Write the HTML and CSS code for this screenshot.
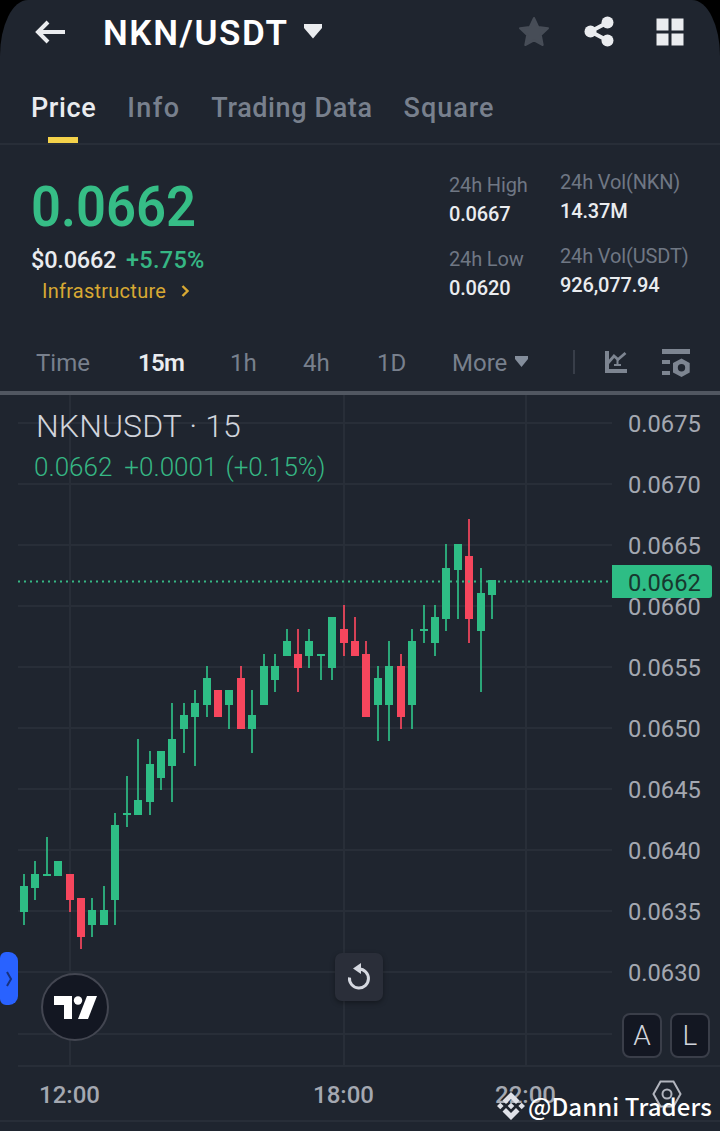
FILE: index.html
```html
<!DOCTYPE html>
<html lang="en">
<head>
  <meta charset="UTF-8">
  <title>NKN/USDT</title>
  <link rel="stylesheet" href="styles.css">
</head>
<body>

  <div class="app">
    <header class="header">
      <svg class="back" width="32" height="26" viewBox="0 0 32 26">
        <path d="M14 3L4 13L14 23M4 13H31" fill="none" stroke="#eaecef" stroke-width="4"/>
      </svg>
      <h1 class="pair">NKN/USDT</h1>
      <svg class="caret" width="18" height="15" viewBox="0 0 18 15">
        <path d="M0 0H18V4L9 14.5L0 4Z" fill="#eaecef"/>
      </svg>
      <div class="actions">
        <svg width="32" height="32" viewBox="0 0 32 32">
          <path d="M16 2L20.2 11L30 12.2L22.8 19L24.7 29L16 24.4L7.300 29L9.200 19L2 12.200L11.800 11Z" fill="#474d57" stroke="#474d57" stroke-width="2" stroke-linejoin="round"/>
        </svg>
        <svg width="32" height="32" viewBox="0 0 32 32">
          <path d="M24.500 6.500L7.500 15.500L24.500 24.500" fill="none" stroke="#eaecef" stroke-width="4"/>
          <circle cx="24.500" cy="6.500" r="6" fill="#eaecef"/>
          <circle cx="7.500" cy="15.500" r="6" fill="#eaecef"/>
          <circle cx="24.500" cy="24.500" r="6" fill="#eaecef"/>
        </svg>
        <svg width="28" height="28" viewBox="0 0 28 28">
          <path d="M0.500 0.500h12v12h-12zM15.500 0.500h12v12h-12zM0.500 15.500h12v12h-12zM15.500 15.500h12v12h-12z" fill="#eaecef"/>
        </svg>
      </div>
    </header>

    <nav class="tabs">
      <a class="tab active">Price</a>
      <a class="tab info">Info</a>
      <a class="tab trading">Trading Data</a>
      <a class="tab">Square</a>
    </nav>

    <section class="summary">
      <div class="quote">
        <div class="last-price">0.0662</div>
        <div class="fiat">$0.0662 <span class="change">+5.75%</span></div>
        <div class="category">Infrastructure
          <svg width="8" height="12" viewBox="0 0 8 12">
            <path d="M1.500 1L6.500 6L1.500 11" fill="none" stroke="#d8a933" stroke-width="2.400"/>
          </svg>
        </div>
      </div>
      <div class="stats high-low">
        <div class="stat"><span class="label">24h High</span><span class="value">0.0667</span></div>
        <div class="stat"><span class="label">24h Low</span><span class="value">0.0620</span></div>
      </div>
      <div class="stats volume">
        <div class="stat"><span class="label">24h Vol(NKN)</span><span class="value">14.37M</span></div>
        <div class="stat"><span class="label">24h Vol(USDT)</span><span class="value">926,077.94</span></div>
      </div>
    </section>

    <div class="intervals">
      <span class="interval time">Time</span>
      <span class="interval selected">15m</span>
      <span class="interval hour">1h</span>
      <span class="interval hours">4h</span>
      <span class="interval day">1D</span>
      <span class="interval more">More
        <svg width="13" height="11" viewBox="0 0 13 11"><path d="M0 0H13V3L6.500 11L0 3Z" fill="#848e9c"/></svg>
      </span>
      <span class="divider"></span>
      <svg class="indicator" width="24" height="24" viewBox="0 0 24 24" fill="none" stroke="#7d8591">
        <path d="M3 1V21H23" stroke-width="4"/>
        <path d="M4 13L10 6L14 9.500L21.500 3" stroke-width="2.800"/>
        <path d="M10 15H17M13.500 9V15" stroke-width="2"/>
      </svg>
      <svg class="settings" width="28" height="28" viewBox="0 0 28 28">
        <path d="M0 0H28V5H0ZM0 11H8V15H0ZM0 22H8V26H0Z" fill="#7d8591"/>
        <path d="M19.500 9.500L27.700 14V23.500L19.500 28L11 23.500V14ZM19.500 15A3.700 3.700 0 1 0 19.500 22.400A3.700 3.700 0 1 0 19.500 15Z" fill="#7d8591" fill-rule="evenodd"/>
      </svg>
    </div>

    <main class="chart">
      <svg id="plot" class="plot" width="720" height="736" viewBox="0 395 720 736"></svg>

      <div class="legend">
        <div class="symbol">NKNUSDT · 15</div>
        <div class="legend-values"><span>0.0662</span><span>+0.0001</span><span>(+0.15%)</span></div>
      </div>

      <div class="drawer">
        <svg width="8" height="16" viewBox="0 0 8 16"><path d="M2 1L6 8L2 15" fill="none" stroke="#18327e" stroke-width="2"/></svg>
      </div>

      <div class="tv-logo">
        <svg width="44" height="24" viewBox="0 0 44 24" fill="#fff">
          <path d="M0 0H18V23H10V9H0Z"/>
          <circle cx="24" cy="4.500" r="4.200"/>
          <path d="M33 0H43L34 23H24Z"/>
        </svg>
      </div>

      <div class="reset">
        <svg width="26" height="28" viewBox="0 0 26 28">
          <path d="M3.500 14.500A9.500 9.500 0 1 0 13 6" fill="none" stroke="#d5d8e0" stroke-width="3"/>
          <path d="M15 0V11L7 5.500Z" fill="#d5d8e0"/>
        </svg>
      </div>

      <div class="scale-buttons">
        <button>A</button>
        <button>L</button>
      </div>

      <svg class="axis-settings" width="30" height="28" viewBox="0 0 30 28" fill="none" stroke="#b2b5be" stroke-width="2">
        <path d="M8.500 1.500H21.500L28.500 14L21.500 26.500H8.500L1.500 14Z"/>
        <circle cx="15" cy="14" r="4.500"/>
      </svg>

      <div class="watermark">
        <svg width="28" height="28" viewBox="0 0 28 28" fill="#dfe1e8">
          <path d="M14 0L22.500 8.500L19 12L14 7L9 12L5.500 8.500ZM14 28L22.500 19.500L19 16L14 21L9 16L5.500 19.500ZM14 10.700L17.300 14L14 17.300L10.700 14ZM3.300 10.700L6.600 14L3.300 17.300L0 14ZM24.700 10.700L28 14L24.700 17.300L21.400 14Z"/>
        </svg>
        <span>@Danni Traders</span>
      </div>
    </main>
  </div>

  <script>
    // open, high, low, close in units of 0.0001
    const candles = [
      [635, 638, 634, 637], [637, 639, 636, 638], [638, 641, 638, 638], [638, 639, 638, 639],
      [638, 638, 635, 636], [636, 636, 632, 633], [634, 636, 633, 635], [634, 637, 634, 635],
      [636, 643, 634, 642], [643, 646, 642, 643], [643, 649, 643, 644], [644, 648, 643, 647],
      [646, 648, 645, 648], [647, 652, 644, 649], [650, 652, 648, 651], [651, 653, 647, 652],
      [652, 655, 651, 654], [653, 653, 651, 651], [652, 653, 650, 653], [654, 655, 650, 650],
      [650, 653, 648, 651], [652, 656, 652, 655], [654, 656, 653, 655], [656, 658, 656, 657],
      [656, 658, 653, 655], [656, 658, 655, 657], [656, 656, 654, 656], [655, 659, 654, 659],
      [658, 660, 656, 657], [657, 659, 656, 656], [656, 657, 651, 651], [652, 655, 649, 654],
      [652, 657, 649, 655], [655, 656, 650, 651], [652, 658, 650, 657], [658, 660, 657, 658],
      [657, 660, 656, 659], [659, 665, 658, 663], [663, 665, 659, 665], [664, 667, 657, 659],
      [658, 663, 653, 661], [661, 662, 659, 662]
    ];

    const plot = document.getElementById("plot");
    const priceY = (price) => 422.5 + (675 - price) * 12.22;
    let svg = "";

    for (let price = 675; price >= 625; price -= 5) {
      const y = Math.round(priceY(price));
      svg += `<rect class="grid" x="18" y="${y - 1}" width="594" height="2"/>`;
      if (price >= 630) {
        svg += `<text class="price-label" x="628" y="${priceY(price) + 9}">0.0${price}</text>`;
      }
    }

    [[70, "12:00"], [344, "18:00"], [526, "22:00"]].forEach(([x, label]) => {
      svg += `<rect class="grid" x="${x - 1}" y="395" width="2" height="670"/>`;
      svg += `<text class="time-label" x="${x - 0.5}" y="1102.500">${label}</text>`;
    });

    svg += `<rect class="grid" x="18" y="1065" width="702" height="2"/>`;
    svg += `<rect class="grid" x="0" y="1120" width="720" height="2"/>`;

    candles.forEach(([open, high, low, close], i) => {
      const x = Math.round(24 + i * 11.415);
      const color = close < open ? "down" : "up";
      const top = Math.round(priceY(Math.max(open, close))) - 1;
      const bottom = Math.round(priceY(Math.min(open, close))) + 1;
      const wickTop = Math.round(priceY(high)) - 1;
      const wickBottom = Math.round(priceY(low)) + 1;
      svg += `<rect class="${color} wick" x="${x - 1}" y="${wickTop}" width="2" height="${wickBottom - wickTop}"/>`;
      svg += `<rect class="${color}" x="${x - 4}" y="${top}" width="8" height="${bottom - top}"/>`;
    });

    svg += `<line class="current-line" x1="18" y1="581.500" x2="612" y2="581.500"/>`;
    svg += `<path class="up" d="M612 565H709Q712 565 712 568V595Q712 598 709 598H612Z"/>`;
    svg += `<text class="current-label" x="628" y="590.500">0.0662</text>`;
    plot.innerHTML = svg;
  </script>

</body>
</html>
```
FILE: styles.css
```css
* {
  box-sizing: border-box;
}

body {
  margin: 0;
  background: #000;
  font-family: Roboto, "Liberation Sans", sans-serif;
  color: #eaecef;
}

.app {
  width: 720px;
  height: 1131px;
  overflow: hidden;
  background: #1f252f;
  border-radius: 28px 28px 0 0 / 56px 56px 0 0;
}

svg {
  display: block;
  flex-shrink: 0;
}

.header {
  display: flex;
  align-items: center;
  height: 64px;
  padding: 0 36px 0 34px;
}

.pair {
  margin: 3px 0 0 37px;
  width: 201px;
  font-size: 35px;
  font-weight: 600;
  letter-spacing: 1.6px;
  color: #fff;
}

.caret {
  margin-top: -2px;
}

.actions {
  display: flex;
  align-items: center;
  gap: 33px;
  margin-left: auto;
}

.actions svg:last-child {
  margin-left: 8px;
}

.tabs {
  display: flex;
  height: 81px;
  padding: 28px 31px 0;
  border-bottom: 2px solid #282e38;
  font-size: 27px;
  font-weight: 500;
  line-height: 32px;
  letter-spacing: 0.6px;
  color: #78808d;
}

.tab {
  display: flex;
  flex-direction: column;
  align-items: center;
  margin-right: 31px;
  white-space: nowrap;
}

.tab.active {
  color: #eaecef;
}

.tab.info {
  letter-spacing: 1.4px;
}

.tab:last-child {
  letter-spacing: 1px;
}

.tab.active::after {
  content: "";
  width: 30px;
  height: 7px;
  margin: 13px 2px 0 0;
  background: #f4d24a;
}

.summary {
  display: flex;
  height: 186px;
  padding-left: 31px;
}

.quote {
  width: 418px;
  padding-top: 30px;
}

.last-price {
  font-size: 55px;
  font-weight: 600;
  line-height: 64px;
  color: #36bd86;
  transform: scaleX(0.955);
  transform-origin: 0 50%;
}

.fiat {
  margin-top: 7px;
  font-size: 23.5px;
  font-weight: 500;
  line-height: 28px;
  letter-spacing: -0.2px;
}

.change {
  margin-left: 4px;
  letter-spacing: 0.3px;
  color: #36b784;
}

.category {
  display: flex;
  align-items: center;
  gap: 15px;
  margin: 5px 0 0 11px;
  font-size: 20px;
  line-height: 24px;
  letter-spacing: 0.25px;
  color: #d8a933;
}

.stats {
  display: flex;
  flex-direction: column;
  gap: 16px;
  font-size: 20px;
  letter-spacing: -0.15px;
}

.high-low {
  width: 111px;
  padding-top: 26px;
}

.volume {
  padding-top: 23px;
}

.stat {
  display: flex;
  flex-direction: column;
  line-height: 29px;
}

.label {
  color: #6f7784;
}

.value {
  font-weight: 500;
}

.intervals {
  display: flex;
  align-items: center;
  height: 64px;
  padding: 3px 0 0 36px;
  border-bottom: 4px solid #515761;
  font-size: 24px;
  color: #78808d;
}

.time {
  width: 102px;
}

.selected {
  width: 92px;
  font-weight: 600;
  letter-spacing: -0.7px;
  color: #eaecef;
}

.hour {
  width: 73px;
}

.hours {
  width: 74px;
}

.day {
  width: 75px;
}

.more {
  display: flex;
  align-items: center;
  gap: 8px;
  width: 121px;
}

.more svg {
  margin-top: -2px;
}

.divider {
  width: 2px;
  height: 24px;
  margin-top: -2px;
  background: #383e49;
}

.indicator {
  margin: -2px 0 0 29px;
}

.settings {
  margin: 0 0 0 34px;
}

.chart {
  position: relative;
  height: 736px;
}

.grid {
  fill: #282e38;
}

.up {
  fill: #2ebd85;
}

.down {
  fill: #f6465d;
}

.wick {
  opacity: 0.85;
}

.price-label,
.current-label {
  font-size: 23.7px;
  fill: #a4a8b1;
}

.current-label {
  fill: #17382f;
}

.time-label {
  font-size: 24px;
  font-weight: 500;
  text-anchor: middle;
  fill: #a4a8b1;
}

.current-line {
  stroke: #36b784;
  stroke-width: 2;
  stroke-dasharray: 2 4;
}

.legend {
  position: absolute;
  top: 12px;
  left: 34px;
}

.symbol {
  padding-left: 2px;
  font-size: 32px;
  font-weight: 300;
  line-height: 38px;
  letter-spacing: 0.1px;
  color: #d1d4dc;
}

.legend-values {
  display: flex;
  gap: 12px;
  margin-top: 7px;
  font-size: 26px;
  font-weight: 300;
  line-height: 31px;
  color: #36b784;
}

.legend-values span:last-child {
  margin-left: -4px;
}

.drawer {
  position: absolute;
  top: 557px;
  left: 0;
  display: flex;
  align-items: center;
  justify-content: center;
  width: 18px;
  height: 53px;
  border-radius: 6px 9px 9px 6px;
  background: #2962ff;
}

.tv-logo {
  position: absolute;
  top: 578px;
  left: 41px;
  display: flex;
  align-items: center;
  justify-content: center;
  width: 68px;
  height: 68px;
  padding: 2px 0 0 1px;
  border: 2px solid #434651;
  border-radius: 50%;
  background: #131722;
}

.reset {
  position: absolute;
  top: 558px;
  left: 335px;
  display: flex;
  align-items: center;
  justify-content: center;
  width: 48px;
  height: 48px;
  border-radius: 7px;
  background: #2a2e39;
  box-shadow: 0 2px 5px rgba(0, 0, 0, 0.35);
}

.scale-buttons {
  position: absolute;
  top: 618px;
  left: 622px;
  display: flex;
  gap: 8px;
}

.scale-buttons button {
  width: 40px;
  height: 45px;
  padding: 0;
  border: 2px solid #3a3e49;
  border-radius: 8px;
  background: #131722;
  font-family: inherit;
  font-size: 28px;
  font-weight: 300;
  color: #d1d4dc;
}

.axis-settings {
  position: absolute;
  top: 685px;
  left: 652px;
}

.watermark {
  position: absolute;
  top: 694px;
  left: 497px;
  display: flex;
  align-items: center;
  gap: 3px;
  font-family: "Noto Sans CJK SC", "Noto Sans", sans-serif;
  font-size: 24px;
  font-weight: 500;
  line-height: 34px;
  letter-spacing: 0.1px;
  color: #fff;
  white-space: nowrap;
}
```
